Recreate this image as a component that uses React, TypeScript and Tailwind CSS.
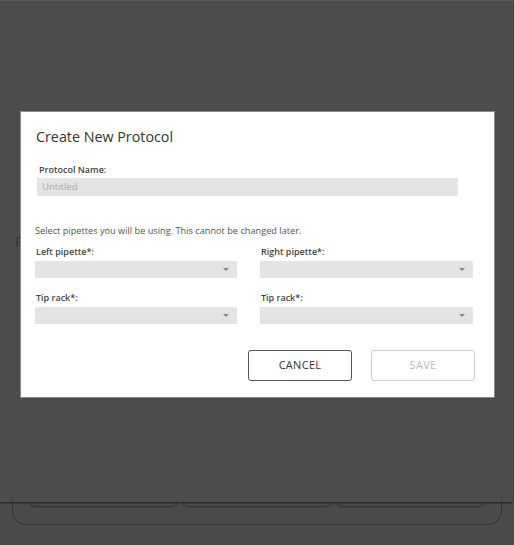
import React from "react";

const fieldLabel = "pl-px text-[9px] leading-[14px] font-semibold text-[#444]";

const Select = () => (
  <div className="flex h-[17px] items-center justify-end bg-[#e4e4e4] pr-[8px]">
    <span className="h-0 w-0 border-x-[3px] border-t-[3px] border-x-transparent border-t-[#888]" />
  </div>
);

const PipetteField = ({ label }: { label: string }) => (
  <div className="flex flex-col">
    <span className={fieldLabel}>{label}</span>
    <div className="mt-[2px]">
      <Select />
    </div>
  </div>
);

const App: React.FC = () => {
  return (
    <div className="relative h-[545px] w-[514px] overflow-hidden bg-[#4b4b4b] font-['Open_Sans',sans-serif]">
      {/* page behind the overlay */}
      <div className="flex flex-col pt-[233px]">
        <span className="pl-[15px] text-[14px] leading-[18px] text-[#0a0a0a]">P</span>
        <div className="mx-3 mt-[244px] h-[30px] rounded-b-[14px] border-x border-b border-[#333] px-[17px]">
          <div className="mt-[5px] grid grid-cols-3 gap-[6px]">
            <div className="h-[6px] rounded-b-[5px] shadow-[0_1px_2px_rgba(0,0,0,0.45)]" />
            <div className="h-[6px] rounded-b-[5px] shadow-[0_1px_2px_rgba(0,0,0,0.45)]" />
            <div className="h-[6px] rounded-b-[5px] shadow-[0_1px_2px_rgba(0,0,0,0.45)]" />
          </div>
        </div>
      </div>

      {/* overlay */}
      <div className="absolute left-0 top-0 h-[502px] w-[513px] border-t border-[#5c5c5c] bg-[rgba(77,77,77,0.62)] pl-[20px] pt-[110px] shadow-[0_1px_2px_rgba(0,0,0,0.55)]">
        <div className="flex h-[287px] w-[475px] flex-col border border-[#8a8a8a] bg-white">
          <h2 className="pl-[15px] pt-[15px] text-[14.3px] leading-[20px] font-medium text-[#333]">
            Create New Protocol
          </h2>

          <div className="mt-4 flex flex-col pl-[16px]">
            <span className="pl-[2px] text-[9px] leading-[14px] font-semibold text-[#444]">Protocol Name:</span>
            <div className="mt-[1px] flex h-[18px] w-[421px] items-center bg-[#e4e4e4] pl-[5px] text-[9.5px] text-[#aaa]">
              Untitled
            </div>
          </div>

          <p className="mt-[28px] pl-[14px] text-[9.2px] leading-[14px] text-[#555]">
            Select pipettes you will be using. This cannot be changed later.
          </p>

          <div className="mt-[7px] grid grid-cols-[202px_213px] gap-x-[23px] gap-y-[13px] pl-[14px]">
            <PipetteField label="Left pipette*:" />
            <PipetteField label="Right pipette*:" />
            <PipetteField label="Tip rack*:" />
            <PipetteField label="Tip rack*:" />
          </div>

          <div className="mt-auto flex justify-end gap-[19px] pb-[16px] pr-[19px]">
            <button className="h-[31px] w-[104px] rounded-[3px] border border-[#555] text-[11px] tracking-[0.3px] text-[#333]">
              CANCEL
            </button>
            <button className="h-[31px] w-[104px] rounded-[3px] border border-[#ccc] text-[11px] tracking-[0.3px] text-[#bbb]">
              SAVE
            </button>
          </div>
        </div>
      </div>
    </div>
  );
};

export default App;
